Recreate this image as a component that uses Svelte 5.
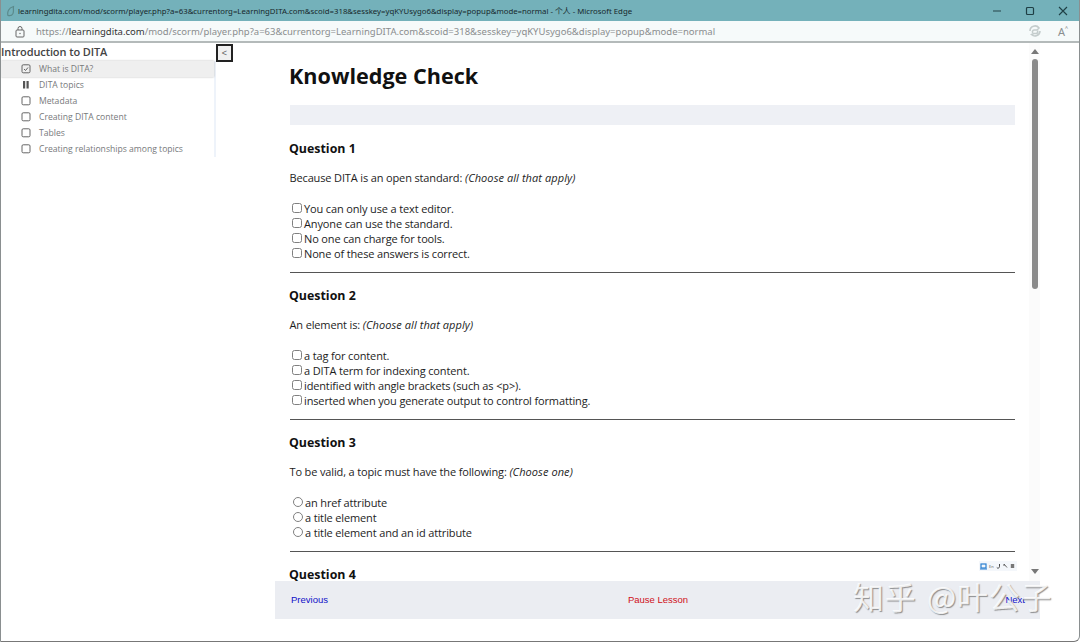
<script>
  const nav = [
    { t: 'What is DITA?', s: 'done' },
    { t: 'DITA topics', s: 'pause' },
    { t: 'Metadata', s: 'empty' },
    { t: 'Creating DITA content', s: 'empty' },
    { t: 'Tables', s: 'empty' },
    { t: 'Creating relationships among topics', s: 'empty' }
  ];
  const questions = [
    { h: 'Question 1', p: 'Because DITA is an open standard: ', c: '(Choose all that apply)', type: 'checkbox',
      a: ['You can only use a text editor.', 'Anyone can use the standard.', 'No one can charge for tools.', 'None of these answers is correct.'] },
    { h: 'Question 2', p: 'An element is: ', c: '(Choose all that apply)', type: 'checkbox',
      a: ['a tag for content.', 'a DITA term for indexing content.', 'identified with angle brackets (such as <p>).', 'inserted when you generate output to control formatting.'] },
    { h: 'Question 3', p: 'To be valid, a topic must have the following: ', c: '(Choose one)', type: 'radio',
      a: ['an href attribute', 'a title element', 'a title element and an id attribute'] }
  ];
</script>

<div class="window">
  <header class="titlebar">
    <svg class="favicon" width="10" height="12" viewBox="0 0 10 12"><path d="M2 10.5C1 7 2.5 3 7.5 1.5 7 4 8 6 7 8.5 6 10.5 4 11 2 10.5Z" fill="none" stroke="#5b8a8c" stroke-width="1.2"/></svg>
    <span class="title">learningdita.com/mod/scorm/player.php?a=63&amp;currentorg=LearningDITA.com&amp;scoid=318&amp;sesskey=yqKYUsygo6&amp;display=popup&amp;mode=normal - 个人 - Microsoft Edge</span>
    <div class="winctl">
      <svg width="10" height="10" viewBox="0 0 10 10"><path d="M1 5H9" stroke="#33565c" stroke-width="1.2"/></svg>
      <svg width="10" height="10" viewBox="0 0 10 10"><rect x="1.5" y="1.5" width="7" height="7" rx="1" fill="none" stroke="#1f3f45" stroke-width="1.2"/></svg>
      <svg width="10" height="10" viewBox="0 0 10 10"><path d="M1 1L9 9M9 1L1 9" stroke="#1f3f45" stroke-width="1.1"/></svg>
    </div>
  </header>

  <div class="addressbar">
    <svg class="lock" width="12" height="13" viewBox="0 0 12 13"><rect x="2" y="5" width="8" height="7" rx="1" fill="none" stroke="#666" stroke-width="1"/><path d="M4 5V3.5a2 2 0 0 1 4 0V5" fill="none" stroke="#666"/><circle cx="6" cy="8.5" r=".7" fill="#666"/></svg>
    <span class="url">https://<b>learningdita.com</b>/mod/scorm/player.php?a=63&amp;currentorg=LearningDITA.com&amp;scoid=318&amp;sesskey=yqKYUsygo6&amp;display=popup&amp;mode=normal</span>
    <svg class="edge" width="12" height="12" viewBox="0 0 12 12"><path d="M1 6a5 5 0 0 1 9-3L8 5H5C3.5 5 3 7 4 8" fill="none" stroke="#c4cccc" stroke-width="1.6"/><path d="M11 6a5 5 0 0 1-8.500 3.500L5 8.500h2c1.500 0 2-1.500 1.500-3" fill="none" stroke="#c4cccc" stroke-width="1.600"/></svg>
    <span class="aa">A<sup>ᴬ</sup></span>
  </div>

  <div class="body">
    <aside class="sidebar">
      <div class="course">Introduction to DITA</div>
      <ul class="nav">
        {#each nav as n, i}
          <li class:active={i === 0}>
            <span class="ico">
              {#if n.s === 'pause'}
                <svg width="10" height="10" viewBox="0 0 10 10"><rect x="2" y="1" width="2.200" height="7.500" fill="#555"/><rect x="5.500" y="1" width="2.200" height="7.500" fill="#555"/></svg>
              {:else}
                <svg width="10" height="10" viewBox="0 0 10 10"><rect x="1" y=".8" width="8" height="8" rx="1.200" fill="none" stroke="#666" stroke-width="1"/>{#if n.s === 'done'}<path d="M3 5l1.500 1.500L7 3.500" fill="none" stroke="#555" stroke-width=".9"/>{/if}</svg>
              {/if}
            </span>
            <span>{n.t}</span>
          </li>
        {/each}
      </ul>
    </aside>
    <div class="togglecol"><button class="toggle">&lt;</button></div>

    <div class="player">
      <div class="scrollarea">
        <main class="content">
          <h1>Knowledge Check</h1>
          <div class="band"></div>
          {#each questions as q, qi}
            <section class="question">
              <h2>{q.h}</h2>
              <p class="prompt">{q.p}<em>{q.c}</em></p>
              <div class="answers">
                {#each q.a as a}
                  <label class="answer"><input type={q.type} name={'q' + qi} /><span>{a}</span></label>
                {/each}
              </div>
            </section>
            <hr />
          {/each}
          <h2 class="q4">Question 4</h2>
        </main>
        <div class="scrollbar">
          <span class="arrow up"></span>
          <span class="thumb"></span>
          <span class="arrow down"></span>
        </div>
        <div class="minitools">
          <svg width="7" height="7" viewBox="0 0 7 7"><rect x="1" y="1" width="5" height="4" fill="none" stroke="#2a7fd0" stroke-width="1.200"/><path d="M0 6H7" stroke="#2a7fd0"/></svg>
          <i class="en">En</i>
          <svg width="5" height="6" viewBox="0 0 5 6"><path d="M3.500 1V3.500A1.500 1.500 0 0 1 .8 4.500" fill="none" stroke="#333" stroke-width=".9"/></svg>
          <svg width="5" height="6" viewBox="0 0 5 6"><path d="M1 1L4 4.500M1 1V3" fill="none" stroke="#555" stroke-width=".9"/></svg>
          <svg width="5" height="6" viewBox="0 0 5 6"><rect x=".8" y="1" width="3.400" height="4" fill="#777"/></svg>
        </div>
      </div>
      <footer class="pager">
        <a class="prev" href="#prev">Previous</a>
        <a class="pause" href="#pause">Pause Lesson</a>
        <a class="next" href="#next">Next</a>
      </footer>
    </div>
  </div>

  <div class="watermark">知乎 @叶公子</div>
</div>

<style>
  :global(body) { margin: 0; background: #fff; }
  .window {
    position: relative;
    width: 1080px;
    height: 642px;
    box-sizing: border-box;
    overflow: hidden;
    border-left: 1px solid #8a8f90;
    border-right: 1px solid #8a8f90;
    border-bottom: 1px solid #777;
    border-bottom-right-radius: 6px;
    font-family: "Open Sans", "Noto Sans", sans-serif;
    background: #fff;
    display: flex;
    flex-direction: column;
  }
  .titlebar {
    height: 21px;
    flex: none;
    background: #74b1ba;
    display: flex;
    align-items: center;
    padding-left: 5px;
    font: 7.8px "Noto Sans", "Noto Sans CJK SC", sans-serif;
    color: #17282c;
    white-space: nowrap;
  }
  .favicon { margin-right: 2px; flex: none; }
  .title { flex: 1; }
  .winctl { display: flex; gap: 23px; margin-right: 11px; align-items: center; }
  .addressbar {
    height: 22px;
    flex: none;
    box-sizing: border-box;
    background: #f6fafa;
    display: flex;
    align-items: center;
    padding-left: 13px;
    border-bottom: 2px solid #b4baba;
    font: 9.5px "Noto Sans", sans-serif;
    color: #8a8d8e;
    white-space: nowrap;
  }
  .lock { flex: none; margin-right: 10px; }
  .url { flex: 1; }
  .url b { font-weight: 400; color: #333; }
  .edge { flex: none; margin-right: 17px; }
  .aa { flex: none; margin-right: 11px; font-size: 11px; color: #8a8f90; line-height: 1; }
  .aa sup { font-size: 7px; }
  .body { flex: 1; display: flex; min-height: 0; }
  .sidebar { width: 215px; flex: none; }
  .course {
    height: 18px;
    line-height: 17px;
    font-size: 11px;
    letter-spacing: -.1px;
    font-weight: 600;
    color: #444;
    white-space: nowrap;
  }
  .nav {
    list-style: none;
    margin: 0;
    padding: 0;
    border-right: 2px solid #eef3fa;
    font-size: 8.6px;
    color: #77797b;
  }
  .nav li { height: 16px; display: flex; align-items: center; padding-left: 20px; }
  .nav li.active { background: #efefef; box-shadow: 0 0 2px #bbb; width: 193px; }
  .ico { width: 18px; display: flex; align-items: center; }
  .togglecol { width: 59px; flex: none; }
  .toggle {
    display: block;
    width: 17px;
    height: 18px;
    padding: 0;
    margin-left: 0;
    margin-top: 1px;
    box-sizing: border-box;
    background: #f0f0f0;
    border: 2px solid #222;
    font: 9px "Liberation Sans", sans-serif;
    color: #666;
  }
  .player { width: 765px; flex: none; display: flex; flex-direction: column; }
  .scrollarea { position: relative; height: 538px; flex: none; display: flex; overflow: hidden; background: #fff; }
  .content { width: 725px; margin-left: 15px; flex: none; color: #1d1d1d; font-size: 11px; letter-spacing: -.14px; }
  h1 { margin: 16px 0 13px -1px; font-size: 21.6px; line-height: 33px; font-weight: 700; color: #111; letter-spacing: 0; }
  .band { height: 20px; background: #eef0f5; margin-bottom: 14px; }
  h2 { margin: 0 0 0 -1px; font-size: 12.4px; line-height: 19px; font-weight: 700; color: #111; letter-spacing: 0; }
  .prompt { margin: 11px 0 14px -.5px; line-height: 18px; }
  .prompt em { letter-spacing: .08px; }
  .answers { display: flex; flex-direction: column; }
  .answer { height: 15px; line-height: 15px; display: flex; align-items: center; white-space: pre; }
  .answer input { appearance: none; width: 10px; height: 10px; margin: 0 2px 1px 2px; border: 1px solid #808080; border-radius: 2.5px; background: #fff; box-sizing: border-box; }
  .answer input[type="radio"] { border-radius: 50%; margin: 0 2px 1px 3px; }
  hr { margin: 11px 0 13px; border: 0; border-top: 1px solid #555; }
  .q4 { white-space: nowrap; }
  .scrollbar { flex: none; width: 11px; margin-left: 14px; background: #fbfbfb; display: flex; flex-direction: column; align-items: center; position: relative; }
  .thumb { width: 6px; height: 230px; background: #8b8b8b; border-radius: 3px; margin-top: 5px; }
  .arrow { width: 0; height: 0; border-left: 4px solid transparent; border-right: 4px solid transparent; }
  .arrow.up { border-bottom: 5px solid #777; margin-top: 6px; }
  .arrow.down { border-top: 5px solid #777; position: absolute; bottom: 7px; }
  .minitools {
    position: absolute;
    left: 704px;
    top: 518px;
    width: 38px;
    height: 10px;
    display: flex;
    align-items: center;
    gap: 2px;
    padding-left: 1px;
    box-sizing: border-box;
    background: #f4f7fb;
    color: #555;
  }
  .en { font-style: normal; font-size: 4px; letter-spacing: 0; }
  .pager {
    height: 38px;
    flex: none;
    box-sizing: border-box;
    background: #ebedf2;
    display: grid;
    grid-template-columns: 1fr auto 1fr;
    align-items: center;
    padding: 0 15px 2px 16px;
    font: 9.5px "Liberation Sans", sans-serif;
  }
  .pager a { text-decoration: none; }
  .prev, .next { color: #1010c8; }
  .next { justify-self: end; }
  .pause { color: #d01020; }
  .watermark {
    position: absolute;
    left: 852px;
    top: 577px;
    font: 31px "Noto Sans CJK SC", sans-serif;
    line-height: 38px;
    color: rgba(255, 255, 255, .85);
    text-shadow: 1px 1px 1px rgba(90, 90, 90, .65);
    white-space: nowrap;
    letter-spacing: .7px;
    word-spacing: 3px;
  }
</style>
